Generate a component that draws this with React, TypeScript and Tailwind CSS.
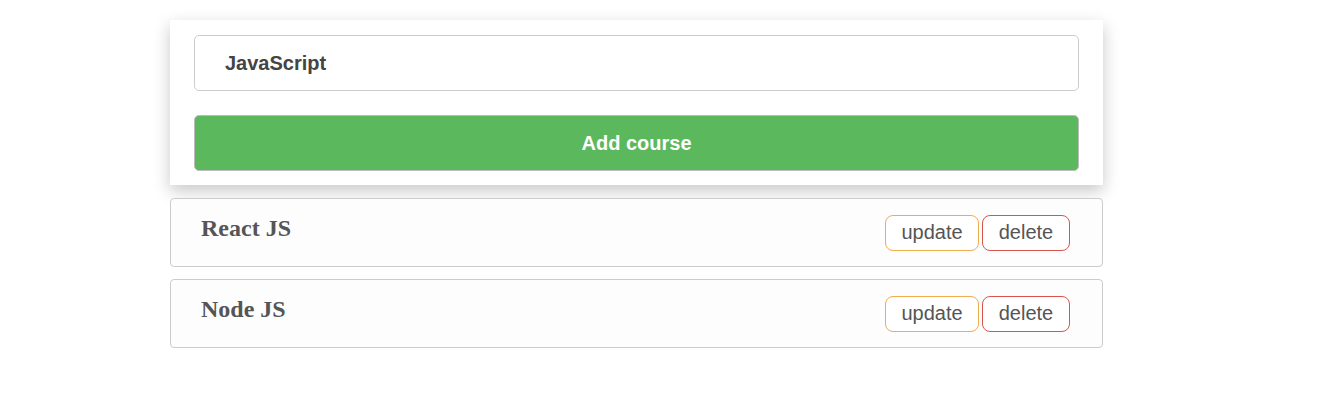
import { useState } from 'react';

const COURSES = ['React JS', 'Node JS'];

export default function App() {
  const [value, setValue] = useState('JavaScript');

  return (
    <div className="min-h-[407px] w-full bg-white pt-5" style={{ fontFamily: '"Liberation Sans", Arial, sans-serif' }}>
      <div className="ml-[170px] w-[933px]">
        <div className="bg-white px-6 pt-[15px] pb-[14px] shadow-[0_6px_16px_rgba(0,0,0,0.22)]">
          <input
            value={value}
            onChange={e => setValue(e.target.value)}
            className="block h-[56px] w-full rounded-[5px] border border-[#ccc] pl-[30px] text-[20px] font-bold text-[#444] outline-none"
          />
          <button className="mt-6 block h-[56px] w-full rounded-[5px] border border-[#bbb] bg-[#5cb85c] text-[20px] font-bold text-white">
            Add course
          </button>
        </div>

        <div className="mt-[13px] flex flex-col gap-3">
          {COURSES.map(name => (
            <div
              key={name}
              className="flex h-[69px] items-center justify-between rounded-[4px] border border-[#ccc] bg-[#fdfdfd] pl-[30px] pr-[32px]"
            >
              <h3
                className="pb-[9px] text-[24px] font-bold text-[#555]"
                style={{ fontFamily: '"Liberation Serif", "Times New Roman", serif' }}
              >
                {name}
              </h3>
              <div className="flex gap-[3px]">
                <button className="h-[36px] w-[94px] rounded-[8px] border border-[#f0ad4e] bg-white pb-[2px] text-[20px] text-[#555]">
                  update
                </button>
                <button className="h-[36px] w-[88px] rounded-[8px] border border-[#d9534f] bg-white pb-[2px] text-[20px] text-[#555]">
                  delete
                </button>
              </div>
            </div>
          ))}
        </div>
      </div>
    </div>
  );
}
